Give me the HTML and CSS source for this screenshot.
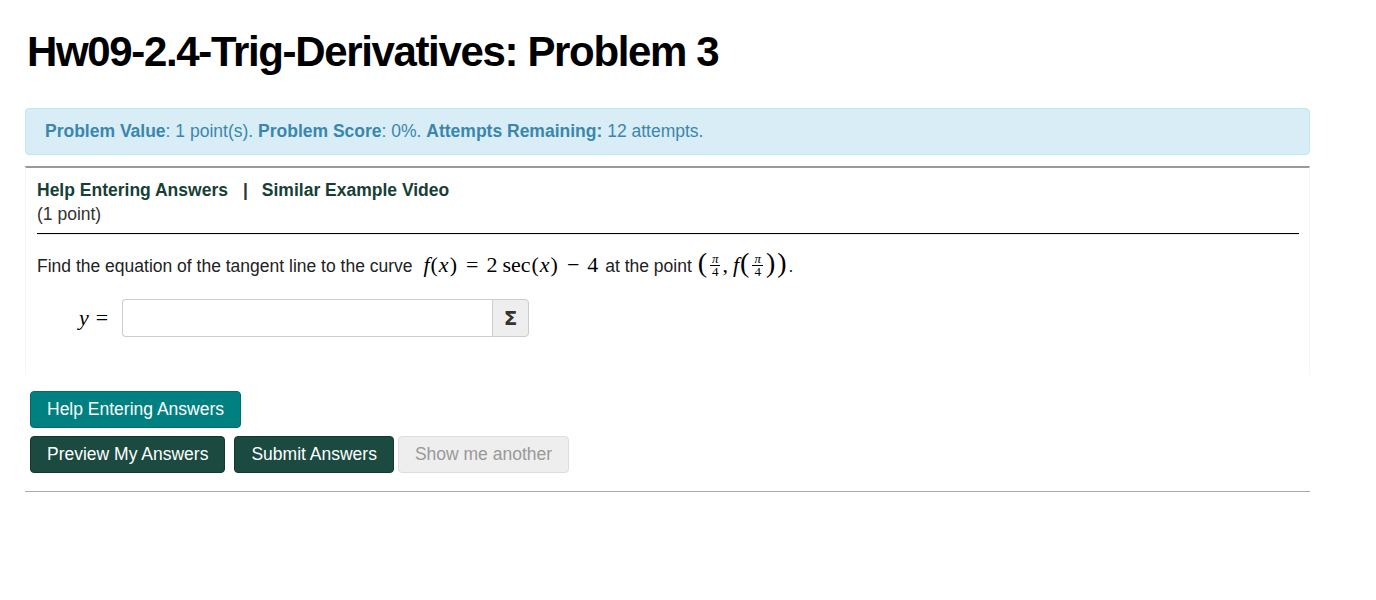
FILE: index.html
```html
<!DOCTYPE html>
<html>
<head>
<meta charset="utf-8">
<link rel="stylesheet" href="styles.css">
</head>
<body>
<div class="page">
  <h1 class="title">Hw09-2.4-Trig-Derivatives: Problem 3</h1>
  <div class="alert">
    <b>Problem Value</b>: 1 point(s). <b>Problem Score</b>: 0%. <b>Attempts Remaining:</b> 12 attempts.
  </div>
  <div class="problem">
    <div class="links">
      <a class="link">Help Entering Answers</a><span class="sep">|</span><a class="link">Similar Example Video</a>
    </div>
    <div class="points">(1 point)</div>
    <div class="rule"></div>
    <p class="question">Find the equation of the tangent line to the curve <span class="math"><i>f</i><span class="p">(</span><i>x</i><span class="p">)</span><span class="rel">=</span>2<span class="thin"></span>sec<span class="p">(</span><i>x</i><span class="p">)</span><span class="bin">−</span>4</span> at the point <span class="math m2"><span class="paren">(</span><span class="frac"><span class="num"><i>π</i></span><span class="den">4</span></span>,<span class="thin"></span><i>f</i><span class="paren">(</span><span class="frac"><span class="num"><i>π</i></span><span class="den">4</span></span><span class="paren">)</span><span class="paren">)</span></span>.</p>
    <div class="answer">
      <span class="math label"><i>y</i><span class="rel">=</span></span>
      <div class="inputgroup">
        <div class="input"></div>
        <div class="sigma">Σ</div>
      </div>
    </div>
  </div>
  <div class="actions">
    <div class="row"><span class="btn teal">Help Entering Answers</span></div>
    <div class="row">
      <span class="btn dark">Preview My Answers</span>
      <span class="btn dark">Submit Answers</span>
      <span class="btn disabled">Show me another</span>
    </div>
  </div>
  <div class="bottom-rule"></div>
</div>
</body>
</html>
```
FILE: styles.css
```css
html, body { margin: 0; padding: 0; background: #fff; }
body { font-family: "Liberation Sans", Arial, sans-serif; font-size: 17.5px; color: #333; }
.page { width: 1285px; margin-left: 25px; }
.title { margin: 0; padding-top: 29px; font-size: 42px; line-height: 46px; font-weight: bold; color: #000; padding-left: 2px; letter-spacing: -1.35px; }
.alert {
  margin-top: 33px; height: 47px; box-sizing: border-box;
  background: #d9edf7; border: 1px solid #bce8f1; border-radius: 4px;
  color: #3a87ad; padding: 11px 19px 0; line-height: 22px; font-size: 17.5px;
}
.alert b { font-weight: bold; }
.problem {
  margin-top: 11px; border-top: 2px solid #999; padding: 10px 10px 38px 11px;
  border-right: 1px solid #f6f6f6; border-left: 1px solid #f6f6f6;
}
.links { line-height: 24px; font-weight: bold; color: #173f36; }
.link { color: #173f36; }
.sep { margin: 0 14px 0 15px; color: #333; font-weight: bold; }
.points { line-height: 24px; color: #333; }
.rule { margin-top: 7px; border-top: 1px solid #000; border-bottom: 1px solid #eee; }
.question { margin: 14px 0 0; line-height: 28px; color: #222; }
.math { font-family: "Liberation Serif", "DejaVu Serif", serif; font-size: 22px; color: #000; margin: 0 2px 0 6px; }
.math i { font-style: italic; }
.p { margin: 0 1px; }
.rel { margin: 0 8px; }
.bin { margin: 0 8px; }
.thin { display: inline-block; width: 5px; }
.m2 { margin-left: 0; margin-right: 1px; }
.paren { font-size: 28px; margin: 0 1px; }
.frac { display: inline-flex; flex-direction: column; vertical-align: middle; font-size: 13px; line-height: 12px; text-align: center; margin: 0 2px; position: relative; top: -1px; }
.num { border-bottom: 1px solid #000; padding: 0 2px; }
.answer { display: flex; align-items: center; margin-top: 19px; padding-left: 42px; }
.label { margin: 0 10px 0 0; width: 33px; white-space: nowrap; }
.label .rel { margin: 0 0 0 7px; }
.inputgroup { display: flex; height: 38px; }
.input { width: 370px; border: 1px solid #ccc; border-right: none; border-radius: 4px 0 0 4px; box-sizing: border-box; }
.sigma { width: 37px; background: #eee; border: 1px solid #ccc; border-radius: 0 4px 4px 0; box-sizing: border-box; display: flex; align-items: center; justify-content: center; font-weight: bold; font-size: 20px; color: #333; font-family: "DejaVu Sans", sans-serif; }
.actions { padding-left: 5px; margin-top: 16px; }
.row { display: flex; gap: 9px; margin-bottom: 8px; }
.row:last-child { margin-bottom: 0; }
.btn { display: inline-block; height: 37px; line-height: 35px; padding: 0 16px; border-radius: 4px; font-size: 17.5px; box-sizing: border-box; border: 1px solid transparent; }
.teal { background: #008080; color: #fff; border-color: #006d6d; }
.dark { background: #1a4a40; color: #fff; border-color: #123830; }
.disabled { background: #eee; color: #999; border-color: #ddd; margin-left: -5px; }
.bottom-rule { margin-top: 18px; border-top: 1px solid #aaa; }
```
